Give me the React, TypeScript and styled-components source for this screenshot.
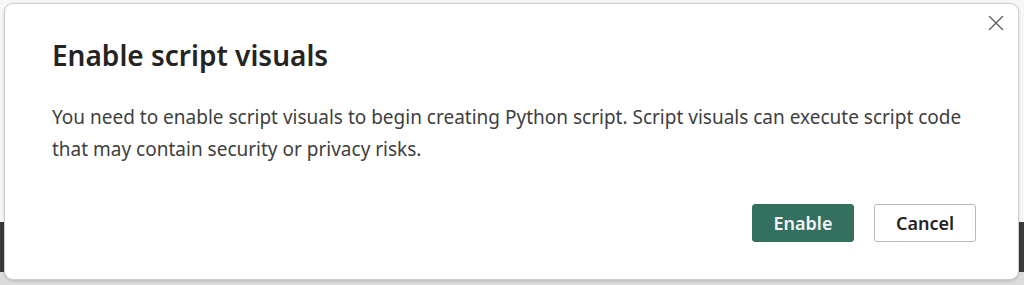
import React from 'react'
import styled, { createGlobalStyle } from 'styled-components'

const GlobalStyle = createGlobalStyle`
  html, body {
    margin: 0;
    padding: 0;
  }
  body {
    width: 1024px;
    height: 285px;
    overflow: hidden;
    background: linear-gradient(
      to bottom,
      #f7f7f7 0,
      #f7f7f7 222px,
      #3a3a3a 222px,
      #3a3a3a 272px,
      #dcdcdc 272px
    );
    font-family: "Noto Sans", "Open Sans", "Liberation Sans", sans-serif;
  }
`

const Page = styled.div`
  padding: 3px 5px 5px 4px;
`

const Dialog = styled.div`
  position: relative;
  box-sizing: border-box;
  height: 277px;
  background: #ffffff;
  border: 1px solid #cfcfcf;
  border-radius: 9px;
  box-shadow: 0 1px 3px rgba(0, 0, 0, 0.18);
  padding: 31px 42px 37px 47px;
  display: flex;
  flex-direction: column;
`

const CloseButton = styled.button`
  position: absolute;
  top: 7px;
  right: 10px;
  width: 24px;
  height: 24px;
  padding: 0;
  border: none;
  background: transparent;
  display: flex;
  align-items: center;
  justify-content: center;
  cursor: pointer;
`

const Title = styled.h1`
  margin: 0;
  font-size: 28px;
  line-height: 40px;
  font-weight: 600;
  color: #252423;
`

const Body = styled.p`
  margin: 26px 0 0 0;
  font-size: 19px;
  line-height: 32px;
  color: #404040;
  max-width: 912px;
`

const Footer = styled.div`
  margin-top: auto;
  display: flex;
  justify-content: flex-end;
  gap: 20px;
`

const Button = styled.button<{ $primary?: boolean }>`
  box-sizing: border-box;
  width: 102px;
  height: 38px;
  border-radius: 3px;
  font-family: inherit;
  font-size: 18px;
  font-weight: 600;
  cursor: pointer;
  background: ${p => (p.$primary ? '#33705f' : '#ffffff')};
  color: ${p => (p.$primary ? '#f4f4f4' : '#252423')};
  border: 1px solid ${p => (p.$primary ? '#33705f' : '#b9b9b9')};
`

export default function App() {
  return (
    <>
      <GlobalStyle />
      <Page>
        <Dialog>
          <CloseButton aria-label="Close">
            <svg width="16" height="16" viewBox="0 0 16 16">
              <path d="M1.5 1.5 L14.5 14.5 M14.5 1.5 L1.5 14.5" stroke="#5f5f5f" strokeWidth="1.4" strokeLinecap="round" />
            </svg>
          </CloseButton>
          <Title>Enable script visuals</Title>
          <Body>
            You need to enable script visuals to begin creating Python script. Script visuals can execute script code
            that may contain security or privacy risks.
          </Body>
          <Footer>
            <Button $primary>Enable</Button>
            <Button>Cancel</Button>
          </Footer>
        </Dialog>
      </Page>
    </>
  )
}
